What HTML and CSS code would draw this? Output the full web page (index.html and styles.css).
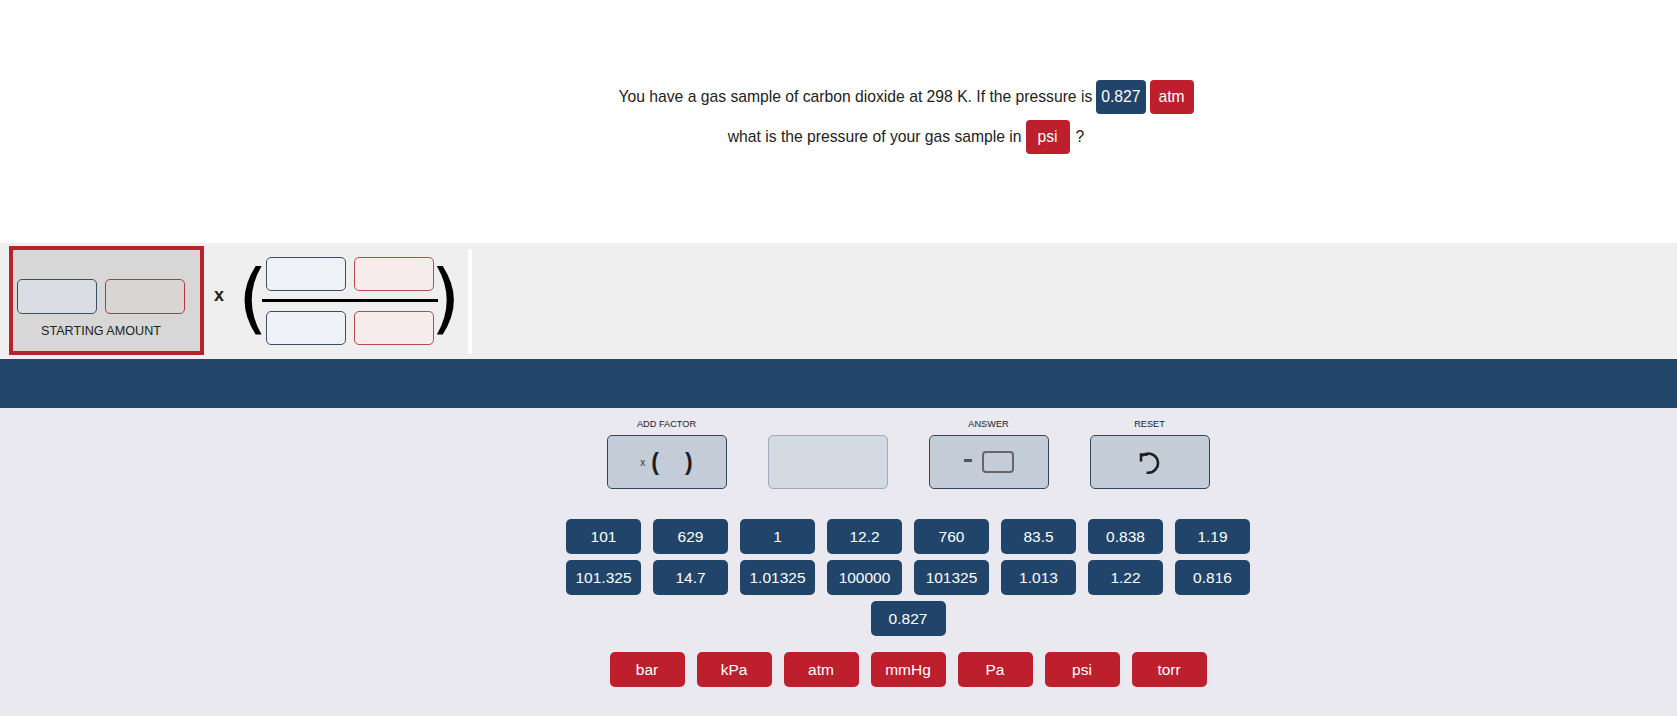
FILE: index.html
```html
<!DOCTYPE html>
<html lang="en">
<head>
<meta charset="utf-8">
<title>Unit conversion</title>
<link rel="stylesheet" href="styles.css">
</head>
<body>
<div class="question">
  <div class="qline">
    <span>You have a gas sample of carbon dioxide at 298 K. If the pressure is</span>
    <span class="badge badge-blue">0.827</span>
    <span class="badge badge-red">atm</span>
  </div>
  <div class="qline">
    <span>what is the pressure of your gas sample in</span>
    <span class="badge badge-red">psi</span>
    <span class="qmark">?</span>
  </div>
</div>

<div class="workbar">
  <div class="start">
    <div class="pair">
      <div class="slot slot-num"></div>
      <div class="slot slot-unit"></div>
    </div>
    <div class="start-label">STARTING AMOUNT</div>
  </div>
  <div class="times">x</div>
  <div class="factor">
    <span class="paren paren-l">(</span>
    <div class="frac">
      <div class="fpair">
        <div class="fslot fnum"></div>
        <div class="fslot funit"></div>
      </div>
      <div class="fbar"></div>
      <div class="fpair">
        <div class="fslot fnum"></div>
        <div class="fslot funit"></div>
      </div>
    </div>
    <span class="paren paren-r">)</span>
  </div>
  <div class="divider"></div>
</div>

<div class="blueband"></div>

<div class="tray">
  <div class="controls">
    <div class="ctrl">
      <div class="ctrl-label">ADD FACTOR</div>
      <div class="ctrl-btn">
        <span class="af-x">x</span><span class="af-p">(</span><span class="af-gap"></span><span class="af-p">)</span>
      </div>
    </div>
    <div class="ctrl">
      <div class="ctrl-label">&nbsp;</div>
      <div class="ctrl-btn ctrl-disabled"></div>
    </div>
    <div class="ctrl">
      <div class="ctrl-label">ANSWER</div>
      <div class="ctrl-btn">
        <span class="ans-dash"></span><span class="ans-box"></span>
      </div>
    </div>
    <div class="ctrl">
      <div class="ctrl-label">RESET</div>
      <div class="ctrl-btn">
        <svg class="reset-icon" width="24" height="24" viewBox="0 0 24 24">
          <polyline points="3 10.5, 3 3.5, 10 3.5" fill="none" stroke="#1e1e1e" stroke-width="2.6" stroke-linecap="butt" stroke-linejoin="miter"/>
          <path d="M4.2 4.8 A9.6 9.6 0 1 1 8.6 21.6" fill="none" stroke="#1e1e1e" stroke-width="2.6"/>
        </svg>
      </div>
    </div>
  </div>

  <div class="numbers">
    <div class="num">101</div>
    <div class="num">629</div>
    <div class="num">1</div>
    <div class="num">12.2</div>
    <div class="num">760</div>
    <div class="num">83.5</div>
    <div class="num">0.838</div>
    <div class="num">1.19</div>
    <div class="num">101.325</div>
    <div class="num">14.7</div>
    <div class="num">1.01325</div>
    <div class="num">100000</div>
    <div class="num">101325</div>
    <div class="num">1.013</div>
    <div class="num">1.22</div>
    <div class="num">0.816</div>
    <div class="num">0.827</div>
  </div>

  <div class="units">
    <div class="unit">bar</div>
    <div class="unit">kPa</div>
    <div class="unit">atm</div>
    <div class="unit">mmHg</div>
    <div class="unit">Pa</div>
    <div class="unit">psi</div>
    <div class="unit">torr</div>
  </div>
</div>
</body>
</html>
```

FILE: styles.css
```css
html, body {
  margin: 0;
  padding: 0;
}
body {
  font-family: "Liberation Sans", Arial, sans-serif;
  color: #222;
  background: #e9e9ef;
  width: 1677px;
  overflow: hidden;
}

/* question */
.question {
  box-sizing: border-box;
  height: 243px;
  padding: 80px 0 0 135px;
  background: #fff;
}
.qline {
  display: flex;
  justify-content: center;
  align-items: center;
  gap: 4px;
  height: 34px;
  font-size: 15.7px;
  color: #222;
}
.qline + .qline {
  margin-top: 6px;
}
.badge {
  box-sizing: border-box;
  height: 34px;
  min-width: 44px;
  padding: 0 5px;
  border-radius: 4px;
  color: #fff;
  display: flex;
  align-items: center;
  justify-content: center;
}
.badge-blue { background: #21456a; }
.badge-red { background: #bd1f2c; }
.qmark { margin-left: 2px; }

/* work bar */
.workbar {
  display: flex;
  align-items: center;
  height: 116px;
  background: #efefef;
}
.start {
  box-sizing: border-box;
  width: 195px;
  height: 109px;
  margin-left: 9px;
  border: 4px solid #b3242b;
  background: #d7d7d7;
  padding: 29px 0 0 4px;
  align-self: flex-start;
  margin-top: 3px;
}
.pair {
  display: flex;
  gap: 8px;
  width: 168px;
}
.slot {
  box-sizing: border-box;
  width: 80px;
  height: 35px;
  border-radius: 5px;
  border: 1px solid;
}
.slot-num { border-color: #3b4d62; background: #dadde1; }
.slot-unit { border-color: #b23a3f; background: #d9d5d5; }
.start-label {
  width: 168px;
  text-align: center;
  font-size: 12.6px;
  line-height: 16px;
  margin-top: 9px;
  color: #222;
}
.times {
  margin-left: 10px;
  margin-bottom: 13px;
  font-size: 18px;
  line-height: 18px;
  font-weight: bold;
  color: #222;
}
.factor {
  display: flex;
  align-items: center;
  margin-left: 14px;
}
.paren {
  font-family: "DejaVu Sans", sans-serif;
  font-size: 76px;
  line-height: 76px;
  margin-bottom: 6px;
  color: #000;
}
.paren-l { margin-right: -2px; }
.paren-r { margin-left: -3px; }
.frac {
  display: flex;
  flex-direction: column;
}
.fpair {
  display: flex;
  gap: 8px;
}
.fslot {
  box-sizing: border-box;
  width: 80px;
  height: 34px;
  border-radius: 5px;
  border: 1px solid;
}
.fnum { border-color: #3c4f66; background: #eef1f5; }
.funit { border-color: #b94a4f; background: #f6ecec; }
.fbar {
  height: 3px;
  background: #000;
  margin: 8px -4px 9px;
}
.divider {
  width: 4px;
  height: 105px;
  background: #fff;
  margin-left: 8px;
}

/* blue band */
.blueband {
  height: 49px;
  background: #22466a;
}

/* tray */
.tray {
  box-sizing: border-box;
  height: 308px;
  padding: 11px 0 0 139px;
  background: #e9e9ef;
}
.controls {
  display: flex;
  justify-content: center;
  gap: 41px;
}
.ctrl {
  width: 120px;
  display: flex;
  flex-direction: column;
  align-items: center;
}
.ctrl-label {
  font-size: 9.2px;
  line-height: 11px;
  height: 11px;
  margin-bottom: 5px;
  color: #222;
}
.ctrl-btn {
  box-sizing: border-box;
  width: 120px;
  height: 54px;
  border: 1px solid #34465a;
  border-radius: 5px;
  background: #c4cdd7;
  display: flex;
  align-items: center;
  justify-content: center;
}
.ctrl-disabled {
  background: #d4dae1;
  border-color: #a0abb7;
}
.af-x {
  font-size: 10px;
  color: #333;
  margin-right: 6px;
}
.af-p {
  font-size: 23px;
  font-weight: bold;
  color: #1e1e1e;
}
.af-gap {
  width: 26px;
}
.ans-dash {
  width: 8px;
  height: 3px;
  background: #555;
  margin-right: 10px;
  margin-bottom: 3px;
}
.ans-box {
  box-sizing: border-box;
  width: 32px;
  height: 22px;
  border: 2px solid #666;
  border-radius: 4px;
}
.reset-icon {
  display: block;
  margin-top: 2px;
}

.numbers {
  display: flex;
  flex-wrap: wrap;
  justify-content: center;
  gap: 6px 12px;
  width: 684px;
  margin: 30px auto 0;
}
.num, .unit {
  width: 75px;
  height: 35px;
  border-radius: 5px;
  color: #fff;
  font-size: 15.5px;
  display: flex;
  align-items: center;
  justify-content: center;
}
.num { background: #21456a; }
.units {
  display: flex;
  justify-content: center;
  gap: 12px;
  margin-top: 16px;
}
.unit { background: #bd1f2c; }
```
